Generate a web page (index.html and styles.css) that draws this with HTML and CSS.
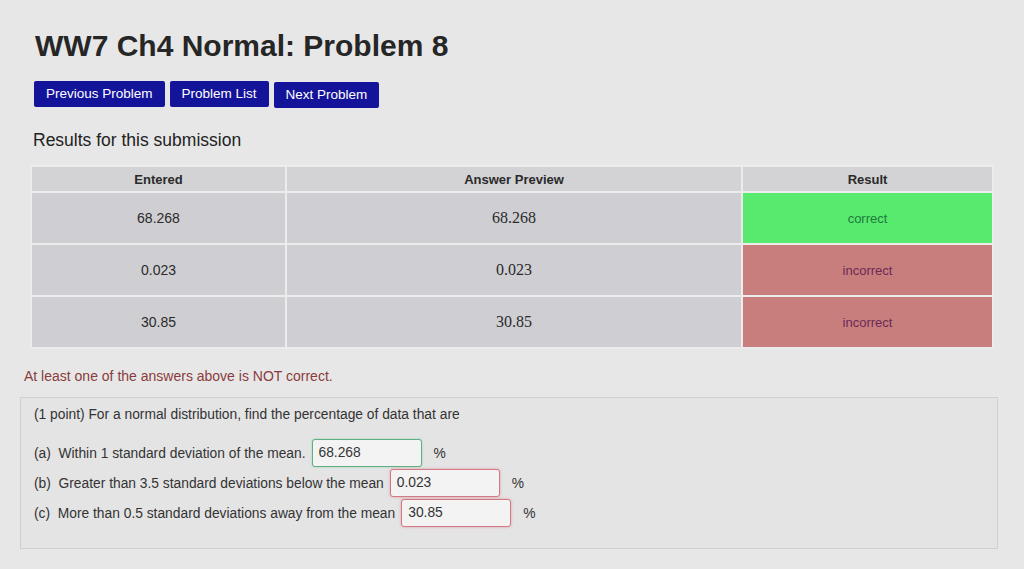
FILE: index.html
```html
<!DOCTYPE html>
<html>
<head>
<meta charset="utf-8">
<link rel="stylesheet" href="styles.css">
</head>
<body>
<div class="page">
  <h1 class="title">WW7 Ch4 Normal: Problem 8</h1>
  <div class="nav">
    <a class="btn">Previous Problem</a>
    <a class="btn">Problem List</a>
    <a class="btn btn-next">Next Problem</a>
  </div>
  <h2 class="results-title">Results for this submission</h2>
  <table class="results">
    <tr class="head">
      <th class="c1">Entered</th>
      <th class="c2">Answer Preview</th>
      <th class="c3">Result</th>
    </tr>
    <tr>
      <td>68.268</td>
      <td class="math">68.268</td>
      <td class="ok">correct</td>
    </tr>
    <tr>
      <td>0.023</td>
      <td class="math">0.023</td>
      <td class="bad">incorrect</td>
    </tr>
    <tr>
      <td>30.85</td>
      <td class="math">30.85</td>
      <td class="bad">incorrect</td>
    </tr>
  </table>
  <p class="warning">At least one of the answers above is NOT correct.</p>
  <div class="problem">
    <p class="intro">(1 point) For a normal distribution, find the percentage of data that are</p>
    <div class="q q-a">
      <span class="label">(a)&nbsp; Within 1 standard deviation of the mean.</span>
      <span class="field good">68.268</span>
      <span class="pct">%</span>
    </div>
    <div class="q q-b">
      <span class="label">(b)&nbsp; Greater than 3.5 standard deviations below the mean</span>
      <span class="field wrong">0.023</span>
      <span class="pct">%</span>
    </div>
    <div class="q q-c">
      <span class="label">(c)&nbsp; More than 0.5 standard deviations away from the mean</span>
      <span class="field wrong">30.85</span>
      <span class="pct">%</span>
    </div>
  </div>
</div>
</body>
</html>
```
FILE: styles.css
```css
html, body {
  margin: 0;
  padding: 0;
}
body {
  background: #e7e7e8;
  font-family: "Liberation Sans", Arial, sans-serif;
  color: #222;
  width: 1024px;
  height: 569px;
  overflow: hidden;
}
.page {
  padding: 28px 26px 0 20px;
}
.title {
  margin: 0 0 0 15px;
  font-size: 30px;
  font-weight: bold;
  color: #262626;
  line-height: 36px;
}
.nav {
  display: flex;
  gap: 5px;
  margin: 17px 0 0 14px;
}
.btn {
  display: block;
  background: #14149a;
  color: #fff;
  font-size: 13.5px;
  line-height: 26px;
  height: 26px;
  padding: 0 12px;
  border-radius: 2px;
}
.btn-next {
  margin-top: 1px;
}
.results-title {
  margin: 20px 0 0 13px;
  font-size: 17.5px;
  font-weight: normal;
  color: #222;
  line-height: 24px;
}
.results {
  margin: 13px 0 0 10px;
  width: 964px;
  border-collapse: collapse;
  border: 1px solid #bdbdbf;
  font-size: 14px;
}
.results th, .results td {
  border: 2px solid #ececed;
  background: #cfcfd3;
  text-align: center;
  color: #2a2a2a;
}
.results th {
  height: 22px;
  font-weight: bold;
  font-size: 13px;
  background: #d3d3d5;
}
.results td {
  height: 48px;
}
.c1 { width: 251px; }
.c2 { width: 452px; }
.results td.math {
  font-family: "Liberation Serif", "Times New Roman", serif;
  font-size: 16px;
}
.results td.ok {
  background: #57ea6f;
  color: #1f7a3a;
  font-size: 13px;
}
.results td.bad {
  background: #c97e7e;
  color: #6a2a55;
  font-size: 13px;
}
.warning {
  margin: 19px 0 0 4px;
  font-size: 14px;
  color: #8a3c3c;
}
.problem {
  margin-top: 13px;
  width: 978px;
  height: 152px;
  border: 1px solid #cfcfd1;
  background: #e4e4e5;
  box-sizing: border-box;
  padding: 8px 0 0 13px;
  font-size: 13.8px;
  color: #333;
}
.intro {
  margin: 0 0 14px 0;
  line-height: 18px;
}
.q {
  display: flex;
  align-items: center;
  height: 30px;
}
.label {
  margin-right: 6px;
}
.field {
  display: block;
  box-sizing: border-box;
  width: 110px;
  height: 28px;
  line-height: 26px;
  padding: 0 6px;
  background: #f3f3f3;
  border: 1px solid #a9a9a9;
  border-radius: 3px;
  color: #333;
}
.field.good {
  border-color: #5fae84;
  box-shadow: 0 0 2px #8fd0a8;
}
.field.wrong {
  border-color: #d07a85;
  box-shadow: 0 0 3px #e2a0a8;
}
.pct {
  margin-left: 12px;
}
```
